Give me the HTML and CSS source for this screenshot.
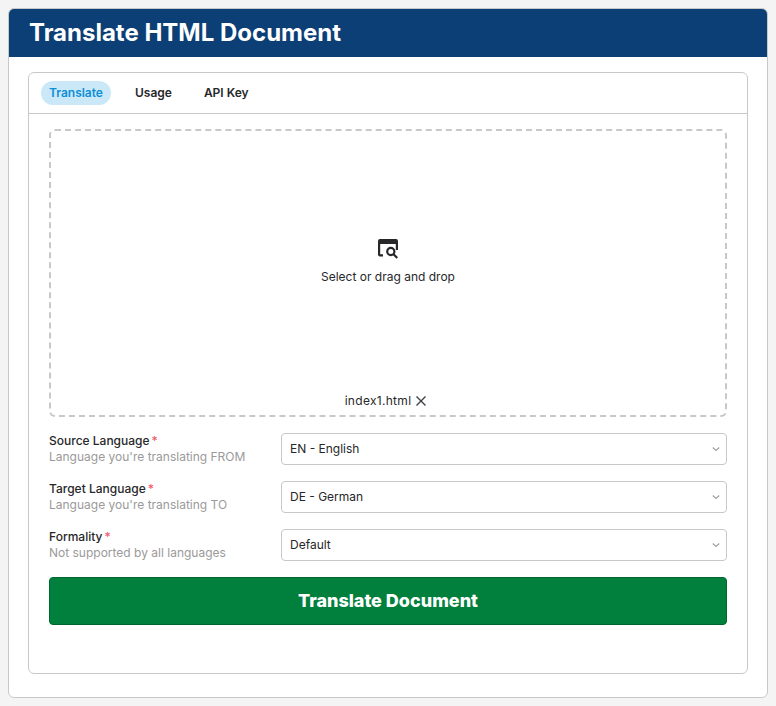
FILE: index.html
```html
<!DOCTYPE html>
<html lang="en">
<head>
<meta charset="utf-8">
<title>Translate HTML Document</title>
<link rel="stylesheet" href="styles.css">
</head>
<body>
<main class="panel">
  <header class="panel-head"><h1>Translate HTML Document</h1></header>
  <div class="panel-body">
    <section class="card">
      <nav class="tabs">
        <a class="tab active">Translate</a>
        <a class="tab">Usage</a>
        <a class="tab">API Key</a>
      </nav>
      <div class="card-body">
        <div class="dropzone">
          <div class="drop-center">
            <svg class="drop-icon" width="20" height="20" viewBox="0 0 20 20" fill="none"><path fill="#27272a" d="M2 0h16a2 2 0 0 1 2 2v9h-2.2V5H2.2v10.2H5V17.500H2a2 2 0 0 1-2-2V2a2 2 0 0 1 2-2z"/><circle cx="12.800" cy="12.500" r="3.600" stroke="#27272a" stroke-width="2.200"/><path stroke="#27272a" stroke-width="2.200" d="M15.500 15.200l3.800 3.800"/></svg>
            <span class="drop-text">Select or drag and drop</span>
          </div>
          <div class="file">
            <span>index1.html</span>
            <svg width="12" height="12" viewBox="0 0 12 12" fill="none" stroke="#3f3f46" stroke-width="1.4"><path d="M1.5 1.5l9 9M10.5 1.5l-9 9"/></svg>
          </div>
        </div>
        <div class="field">
          <div class="label-box">
            <div class="label">Source Language<span class="req">*</span></div>
            <div class="hint">Language you're translating FROM</div>
          </div>
          <div class="select-wrap">
            <select class="select"><option>EN - English</option></select>
            <svg class="chev" width="8" height="6" viewBox="0 0 8 6" fill="none" stroke="#a0a0a0" stroke-width="1.2"><path d="M.8 1.500L4 4.500l3.200-3"/></svg>
          </div>
        </div>
        <div class="field">
          <div class="label-box">
            <div class="label">Target Language<span class="req">*</span></div>
            <div class="hint">Language you're translating TO</div>
          </div>
          <div class="select-wrap">
            <select class="select"><option>DE - German</option></select>
            <svg class="chev" width="8" height="6" viewBox="0 0 8 6" fill="none" stroke="#a0a0a0" stroke-width="1.2"><path d="M.8 1.500L4 4.500l3.200-3"/></svg>
          </div>
        </div>
        <div class="field">
          <div class="label-box">
            <div class="label">Formality<span class="req">*</span></div>
            <div class="hint">Not supported by all languages</div>
          </div>
          <div class="select-wrap">
            <select class="select"><option>Default</option></select>
            <svg class="chev" width="8" height="6" viewBox="0 0 8 6" fill="none" stroke="#a0a0a0" stroke-width="1.2"><path d="M.8 1.500L4 4.500l3.200-3"/></svg>
          </div>
        </div>
        <button class="submit" type="button">Translate Document</button>
      </div>
    </section>
  </div>
</main>
</body>
</html>
```
FILE: styles.css
```css
* { box-sizing: border-box; }
html, body { height: 100%; }
body {
  margin: 0;
  padding: 8px;
  background: #f4f4f4;
  font-family: Inter, "Liberation Sans", sans-serif;
  color: #27272a;
}
.panel {
  height: 690px;
  background: #fff;
  border: 1px solid #c8c8c8;
  border-radius: 6px;
  overflow: hidden;
  display: flex;
  flex-direction: column;
}
.panel-head {
  height: 48px;
  background: #0b3f75;
  padding: 0 20px;
  display: flex;
  align-items: center;
  flex: none;
}
.panel-head h1 {
  margin: 0;
  color: #fff;
  font-size: 24px;
  line-height: 32px;
  font-weight: 700;
}
.panel-body {
  flex: 1;
  padding: 15px 19px 23px;
  display: flex;
}
.card {
  flex: 1;
  border: 1px solid #c8c8c8;
  border-radius: 6px;
  display: flex;
  flex-direction: column;
}
.tabs {
  height: 41px;
  border-bottom: 1px solid #c8c8c8;
  padding: 8px 12px 0;
  display: flex;
  gap: 8px;
  flex: none;
  align-items: flex-start;
}
.tab {
  height: 24px;
  line-height: 24px;
  padding: 0 8px;
  font-size: 12px;
  font-weight: 600;
  border-radius: 12px;
  color: #27272a;
  margin-right: 8px;
}
.tab.active {
  background: #cbe8f8;
  color: #0d8fd6;
}
.card-body {
  padding: 15px 20px;
  display: flex;
  flex-direction: column;
  gap: 16px;
}
.dropzone {
  height: 288px;
  border: 2px dashed #c8c8c8;
  border-radius: 6px;
  position: relative;
  display: flex;
  flex-direction: column;
  align-items: center;
}
.drop-center {
  display: flex;
  flex-direction: column;
  align-items: center;
  padding-top: 108px;
  gap: 10px;
}
.drop-icon { display: block; }
.drop-text { font-size: 12px; line-height: 16px; }
.file {
  margin-top: auto;
  height: 28px;
  display: flex;
  align-items: center;
  gap: 4px;
  font-size: 12px;
  padding: 0 4px 1px 0;
  letter-spacing: .3px;
}
.field {
  height: 32px;
  display: flex;
  align-items: center;
}
.label-box { width: 232px; flex: none; }
.label { font-size: 12px; line-height: 16px; font-weight: 500; }
.req { color: #f25c6c; margin-left: 2px; }
.hint { font-size: 12px; line-height: 16px; color: #9a9a9a; }
.select-wrap { position: relative; flex: 1; height: 32px; }
.select {
  appearance: none;
  width: 100%;
  height: 32px;
  border: 1px solid #c8c8c8;
  border-radius: 4px;
  background: #fff;
  padding: 0 8px 2px;
  font: 12px Inter, "Liberation Sans", sans-serif;
  color: #27272a;
}
.chev { position: absolute; right: 7px; top: 13px; }
.submit {
  height: 48px;
  background: #00803c;
  border: 1px solid #006630;
  border-radius: 4px;
  color: #fff;
  padding: 0 0 2px;
  font: 800 18px Inter, "Liberation Sans", sans-serif;
}
```
